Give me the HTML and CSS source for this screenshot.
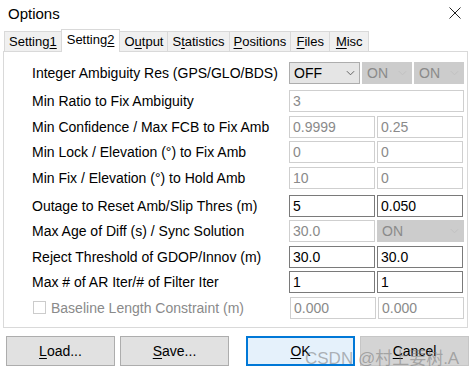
FILE: index.html
```html
<!DOCTYPE html>
<html lang="en">
    <head>
        <meta charset="UTF-8">
        <title>Options</title>
        <link rel="stylesheet" href="styles.css">
    </head>
    <body>
        <div class="dialog">
            <header class="titlebar">
                <span class="title">Options</span>
                <svg class="close" width="12" height="12" viewBox="0 0 12 12">
                    <path d="M0.5 0.5 L11.5 11.5 M11.5 0.5 L0.5 11.5" stroke="#222" stroke-width="1" fill="none"/>
                </svg>
            </header>

            <nav class="tabs">
                <a class="tab">Setting<u>1</u></a>
                <a class="tab active">Setting<u>2</u></a>
                <a class="tab">O<u>u</u>tput</a>
                <a class="tab">S<u>t</u>atistics</a>
                <a class="tab"><u>P</u>ositions</a>
                <a class="tab"><u>F</u>iles</a>
                <a class="tab"><u>M</u>isc</a>
            </nav>

            <section class="panel">
                <div class="row">
                    <label>Integer Ambiguity Res (GPS/GLO/BDS)</label>
                    <div class="controls">
                        <div class="select wide">OFF<svg class="chev" viewBox="0 0 10 6"><path d="M1 1 L5 5 L9 1" stroke="#555" fill="none"/></svg></div>
                        <div class="select off">ON<svg class="chev" viewBox="0 0 10 6"><path d="M1 1 L5 5 L9 1" stroke="#c0c0c0" fill="none"/></svg></div>
                        <div class="select off">ON<svg class="chev" viewBox="0 0 10 6"><path d="M1 1 L5 5 L9 1" stroke="#c0c0c0" fill="none"/></svg></div>
                    </div>
                </div>
                <div class="row sep">
                    <label>Min Ratio to Fix Ambiguity</label>
                    <div class="controls">
                        <div class="edit off full">3</div>
                    </div>
                </div>
                <div class="row">
                    <label>Min Confidence / Max FCB to Fix Amb</label>
                    <div class="controls">
                        <div class="edit off">0.9999</div>
                        <div class="edit off">0.25</div>
                    </div>
                </div>
                <div class="row">
                    <label>Min Lock / Elevation (°) to Fix Amb</label>
                    <div class="controls">
                        <div class="edit off">0</div>
                        <div class="edit off">0</div>
                    </div>
                </div>
                <div class="row">
                    <label>Min Fix / Elevation (°) to Hold Amb</label>
                    <div class="controls">
                        <div class="edit off">10</div>
                        <div class="edit off">0</div>
                    </div>
                </div>
                <div class="row sep">
                    <label>Outage to Reset Amb/Slip Thres (m)</label>
                    <div class="controls">
                        <div class="edit">5</div>
                        <div class="edit">0.050</div>
                    </div>
                </div>
                <div class="row">
                    <label>Max Age of Diff (s) / Sync Solution</label>
                    <div class="controls">
                        <div class="edit off">30.0</div>
                        <div class="select off half">ON<svg class="chev" viewBox="0 0 10 6"><path d="M1 1 L5 5 L9 1" stroke="#c0c0c0" fill="none"/></svg></div>
                    </div>
                </div>
                <div class="row">
                    <label>Reject Threshold of GDOP/Innov (m)</label>
                    <div class="controls">
                        <div class="edit">30.0</div>
                        <div class="edit">30.0</div>
                    </div>
                </div>
                <div class="row">
                    <label>Max # of AR Iter/# of Filter Iter</label>
                    <div class="controls">
                        <div class="edit">1</div>
                        <div class="edit">1</div>
                    </div>
                </div>
                <div class="row">
                    <label class="check"><span class="box"></span>Baseline Length Constraint (m)</label>
                    <div class="controls">
                        <div class="edit off">0.000</div>
                        <div class="edit off">0.000</div>
                    </div>
                </div>
            </section>

            <footer class="buttons">
                <button class="btn"><u>L</u>oad...</button>
                <button class="btn"><u>S</u>ave...</button>
                <button class="btn ok spaced"><u>O</u>K</button>
                <button class="btn cancel"><u>C</u>ancel</button>
            </footer>

            <div class="watermark">CSDN @村上要树.A</div>
        </div>
    </body>
</html>
```

FILE: styles.css
```css
* {
    margin: 0;
    padding: 0;
    box-sizing: border-box;
}

body {
    background-color: #ffffff;
    font-family: "Liberation Sans", "Noto Sans CJK SC", sans-serif;
    font-size: 14px;
    color: #000;
}

.dialog {
    position: relative;
    width: 474px;
    height: 372px;
    overflow: hidden;
}

.titlebar {
    height: 29px;
    display: flex;
    align-items: center;
    justify-content: space-between;
    padding: 0 13px 0 8px;
}

.title {
    font-size: 15px;
    margin-top: -2px;
}

.close {
    width: 12px;
    height: 12px;
    margin-top: -4px;
}

.tabs {
    display: flex;
    align-items: flex-end;
    height: 22px;
    padding-left: 4px;
}

.tab {
    height: 20px;
    min-width: 40px;
    padding: 0 4px;
    line-height: 19px;
    text-align: center;
    background-color: #f0f0f0;
    border: 1px solid #d9d9d9;
    border-bottom: none;
    margin-right: -1px;
    font-size: 13px;
}

.tab.active {
    height: 23px;
    background-color: #fff;
    padding: 0 5px;
    line-height: 20px;
    position: relative;
    z-index: 1;
    margin-bottom: -1px;
}

.tab u, .btn u {
    text-underline-offset: 2px;
}

.panel {
    height: 277px;
    margin: 0 6px 0 3px;
    border: 1px solid #d9d9d9;
    padding: 10px 0 0 28px;
}

.row {
    display: flex;
    align-items: center;
    height: 22px;
    margin-top: 3.5px;
}

.row:first-child {
    margin-top: 0;
}

.row.sep {
    margin-top: 6px;
}

.row label {
    width: 257px;
    white-space: nowrap;
}

.controls {
    display: flex;
    gap: 2px;
    width: 175px;
    height: 22px;
}

.edit {
    width: 86px;
    height: 22px;
    border: 1px solid #7a7a7a;
    padding-left: 3px;
    line-height: 20px;
    background-color: #fff;
}

.edit.off {
    border-color: #cfcfcf;
    color: #8a8a8a;
}

.edit.full {
    width: 175px;
}

.select {
    display: flex;
    align-items: center;
    justify-content: space-between;
    width: 50px;
    height: 22px;
    padding: 0 4px 0 4px;
    background-color: #e5e5e5;
    border: 1px solid #adadad;
}

.select.wide {
    width: 71px;
}

.select.half {
    width: 87px;
}

.select.off {
    background-color: #cccccc;
    border-color: #cccccc;
    color: #8a8a8a;
}

.chev {
    width: 9px;
    height: 6px;
}

.check {
    display: flex;
    align-items: center;
    gap: 5px;
    color: #8a8a8a;
    margin-left: 1px;
}

.box {
    width: 13px;
    height: 13px;
    border: 1px solid #cccccc;
    background-color: #fff;
}

.buttons {
    display: flex;
    gap: 5px;
    padding: 8px 0 0 6px;
}

.btn {
    width: 109px;
    height: 30px;
    background-color: #e1e1e1;
    border: 1px solid #adadad;
    font-family: "Liberation Sans", sans-serif;
    font-size: 14px;
    color: #000;
}

.btn.spaced {
    margin-left: 12px;
}

.btn.ok {
    background-color: #e5f1fb;
    border: 2px solid #0078d7;
}

.btn.cancel {
    background-color: #d4d4d4;
    border-color: #c6c6c6;
}

.watermark {
    position: absolute;
    left: 305px;
    top: 344px;
    font-size: 17px;
    color: rgba(120, 120, 120, 0.55);
    white-space: nowrap;
}
```
